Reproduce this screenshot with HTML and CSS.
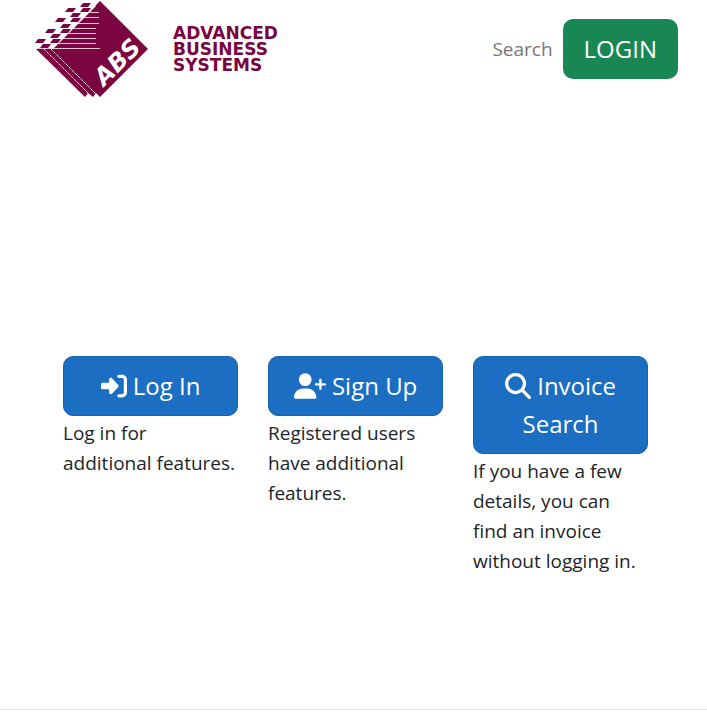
FILE: index.html
```html
<!DOCTYPE html>
<html lang="en">
<head>
    <meta charset="UTF-8">
    <meta name="viewport" content="width=device-width, initial-scale=1.0">
    <title>Advanced Business Systems</title>
    <link rel="stylesheet" href="styles.css">
</head>
<body>
    <header class="navbar">
        <a class="brand" href="#">
            <svg class="brand-mark" viewBox="0 0 114 98" width="114" height="98" aria-hidden="true">
                <path fill="#7a0540" d="M65 1l48 48-48 48-4-4-3 4-5-4-3 4L1 49h16z"/>
                <path fill="none" stroke="#fff" stroke-dasharray="1.5 .6" d="M9 49l48 48M16 49l48 48"/>
                <path stroke="#e6c6d4" d="M54 12.500h10M49 17.500h15M43 23.500h21M38 28.500h23M33 33.500h28M28 38.500h33M23 43.500h38M2 48.500h63"/>
                <path stroke="#fff" stroke-width="3" d="M60 5L17 48"/>
                <!-- chequered edge -->
                <g fill="#7a0540">
                    <path d="M48 3h8l-3 4h-8zM38 13h8l-3 4h-8zM28 24h8l-3 4h-8zM18 34h8l-3 4h-8zM8 44h8l-3 4H5z"/>
                    <path d="M33 8h8l-3 4h-8zM23 18h8l-3 4h-8zM13 29h8l-3 4h-8zM3 39h8l-3 4H0z"/>
                    <path d="M48 8h8l-3 4h-8zM38 18h8l-3 4h-8zM28 29h8l-3 4h-8zM18 39h8l-3 4h-8z"/>
                </g>
                <text class="brand-initials" transform="translate(69 87) rotate(-45)">ABS</text>
            </svg>
            <span class="brand-name">ADVANCED<br>BUSINESS<br>SYSTEMS</span>
        </a>
        <nav class="nav-links">
            <a class="nav-link" href="#">Search</a>
            <button class="btn btn-success" type="button">LOGIN</button>
        </nav>
    </header>
    <main class="container">
        <div class="options">
            <div class="option">
                <button class="btn btn-primary" type="button"><svg class="icon" viewBox="0 0 512 512" width="26" height="26" aria-hidden="true"><path fill="currentColor" d="M352 96h64c18 0 32 14 32 32v256c0 18-14 32-32 32h-64c-18 0-32 14-32 32s14 32 32 32h64c53 0 96-43 96-96V128c0-53-43-96-96-96h-64c-18 0-32 14-32 32s14 32 32 32zM343 273c9-10 9-24 0-34L217 103c-7-6-15-9-24-9-18 0-33 15-33 33v65H32c-18 0-32 14-32 32v64c0 18 14 32 32 32h128v65c0 18 15 33 33 33 9 0 17-3 24-9z"/></svg> Log In</button>
                <p>Log in for additional features.</p>
            </div>
            <div class="option">
                <button class="btn btn-primary" type="button"><svg class="icon" viewBox="0 0 640 512" width="32" height="26" aria-hidden="true"><path fill="currentColor" d="M96 128a128 128 0 1 1 256 0 128 128 0 1 1-256 0zM0 482c0-98 80-178 178-178h92c98 0 178 80 178 178 0 17-13 30-30 30H30c-17 0-30-13-30-30zM504 312v-64h-64c-13 0-24-11-24-24s11-24 24-24h64v-64c0-13 11-24 24-24s24 11 24 24v64h64c13 0 24 11 24 24s-11 24-24 24h-64v64c0 13-11 24-24 24s-24-11-24-24z"/></svg> Sign Up</button>
                <p>Registered users have additional features.</p>
            </div>
            <div class="option">
                <button class="btn btn-primary" type="button"><svg class="icon" viewBox="0 0 512 512" width="26" height="26" aria-hidden="true"><path fill="currentColor" d="M416 208c0 46-15 88-40 123l127 126c12 13 12 33 0 46s-33 12-46 0L331 376c-35 25-77 40-123 40C93 416 0 323 0 208S93 0 208 0s208 93 208 208zM208 352a144 144 0 1 0 0-288 144 144 0 1 0 0 288z"/></svg> Invoice Search</button>
                <p>If you have a few details, you can find an invoice without logging in.</p>
            </div>
        </div>
    </main>
    <footer class="footer"></footer>
</body>
</html>
```

FILE: styles.css
```css
* {
    box-sizing: border-box;
}
body {
    margin: 0;
    min-height: 100vh;
    display: flex;
    flex-direction: column;
    font-family: "Open Sans", "Noto Sans", sans-serif;
    font-size: 19px;
    line-height: 30px;
    color: #212529;
    background: #fff;
}
.navbar {
    display: flex;
    justify-content: space-between;
    align-items: center;
    padding: 0 29px 0 35px;
}
.brand {
    display: flex;
    align-items: center;
    gap: 24px;
    color: #7a0540;
    text-decoration: none;
}
.brand-mark {
    display: block;
    overflow: visible;
}
.brand-initials {
    font-family: "DejaVu Sans", sans-serif;
    font-size: 24px;
    font-weight: bold;
    font-style: italic;
    fill: #fff;
}
.brand-name {
    font-family: "DejaVu Sans", sans-serif;
    font-size: 17px;
    font-weight: bold;
    line-height: 16px;
}
.nav-links {
    display: flex;
    align-items: center;
    gap: 10px;
}
.nav-link {
    color: #777;
    text-decoration: none;
}
.btn {
    padding: 10px 20px;
    border: 1px solid transparent;
    border-radius: 10px;
    font-family: inherit;
    font-size: 24px;
    line-height: 38px;
    color: #fff;
    cursor: pointer;
}
.btn-success {
    background: #198754;
}
.btn-primary {
    width: 100%;
    background: #1b6ec2;
    border-color: #1861ac;
}
.icon {
    vertical-align: -4px;
}
.container {
    flex: 1;
    padding: 258px 59px 0 63px;
}
.options {
    display: grid;
    grid-template-columns: repeat(3, 1fr);
    gap: 30px;
}
.option p {
    margin: 2px 0 0;
}
.footer {
    height: 12px;
    border-top: 1px solid #dee2e6;
}
```
